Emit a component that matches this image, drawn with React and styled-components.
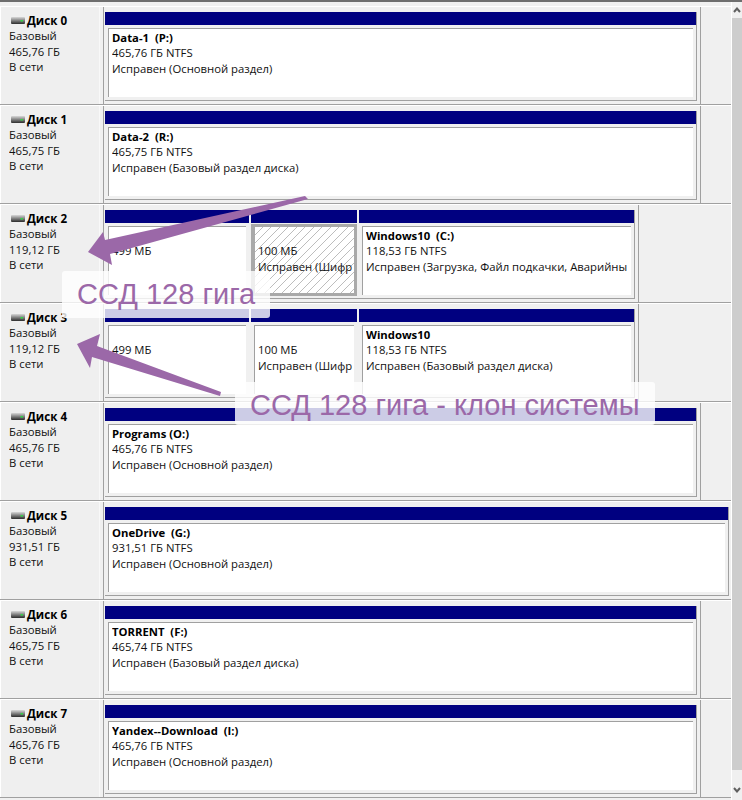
import React from "react";
import styled, { createGlobalStyle, css } from "styled-components";

const Global = createGlobalStyle`
  html, body { margin: 0; padding: 0; background: #f0f0f0; }
  body { width: 742px; height: 800px; overflow: hidden; }
`;

const LINE = "#a0a0a0";

const Page = styled.div`
  position: relative;
  width: 742px;
  height: 800px;
  overflow: hidden;
  background: #f0f0f0;
  font-family: "Open Sans", "Noto Sans", sans-serif;
  font-size: 11.3px;
  line-height: 15.3px;
  color: #111;
  font-variant-ligatures: none;
`;
const TopLine = styled.div`
  height: 2px;
  background: #6e6e6e;
`;
const Body = styled.div`
  display: flex;
  height: 798px;
`;
const Rows = styled.div`
  width: 731px;
  padding-top: 4px;
  border-right: 1px solid #fff;
`;
const Scrollbar = styled.div`
  width: 10px;
  display: flex;
  flex-direction: column;
  align-items: stretch;
`;
const ArrowCap = styled.div`
  height: 16px;
  display: flex;
  align-items: center;
  justify-content: center;
`;
const BottomCap = styled(ArrowCap)`
  margin-top: auto;
  margin-bottom: 2px;
`;
const Thumb = styled.div`
  height: 752px;
  background: #cdcdcd;
`;
const Row = styled.div`
  display: flex;
  height: 99px;
  box-sizing: border-box;
  border-bottom: 1px solid ${LINE};
  border-top: 1px solid #fff;
`;
const Label = styled.div`
  width: 100px;
  margin-right: 3px;
  box-sizing: border-box;
  padding: 6px 0 0 8px;
  border-left: 1px solid #fff;
  border-right: 1px solid #f8f8f8;
  background: #efefef;
  white-space: nowrap;
`;
const DiskName = styled.div`
  display: flex;
  align-items: center;
  gap: 2px;
  padding-left: 2px;
  font-size: 11.6px;
  font-weight: 700;
  color: #000;
`;
const Track = styled.div`
  width: ${(p) => p.$width}px;
  box-sizing: border-box;
  display: flex;
  padding: 5px 3px 3px 1px;
  border-left: 1px solid ${LINE};
  ${(p) =>
    p.$open
      ? css`padding-right: 2px;`
      : css`border-right: 1px solid ${LINE};`}
`;
const Frame = styled.div`
  flex: 1;
  min-width: 0;
  display: flex;
  gap: 2px;
  border-right: 1px solid ${LINE};
  border-bottom: 1px solid ${LINE};
`;
const Partition = styled.div`
  width: ${(p) => (p.$width ? `${p.$width}px` : "auto")};
  flex: ${(p) => (p.$width ? "none" : "1")};
  min-width: 0;
  display: flex;
  flex-direction: column;
`;
const Bar = styled.div`
  height: 13px;
  background: #000080;
`;
const Cell = styled.div`
  flex: 1;
  min-height: 0;
  display: flex;
  padding: 3px;
`;
const Volume = styled.div`
  flex: 1;
  min-width: 0;
  box-sizing: border-box;
  padding: 1px 0 0 3px;
  background: #fff;
  border-top: 1px solid ${LINE};
  border-left: 1px solid ${LINE};
  overflow: hidden;
  ${(p) =>
    p.$selected &&
    css`
      margin: -2px -3px -1px -3px;
      padding: 1px 0 0 3px;
      border: 3px solid #a9a9a9;
      border-left-width: 4px;
      background: repeating-linear-gradient(135deg, #fff 0 5.2px, #bdbdbd 5.2px 6px);
    `}
`;
const Line = styled.div`
  white-space: pre;
  overflow: hidden;
  height: 15.3px;
`;
const VolumeName = styled(Line)`
  font-weight: 700;
  color: #000;
`;
const Callout = styled.div`
  position: absolute;
  left: ${(p) => p.$x}px;
  top: ${(p) => p.$y}px;
  width: ${(p) => p.$w}px;
  height: ${(p) => p.$h}px;
  box-sizing: border-box;
  padding: ${(p) => p.$shift}px 0 0 15px;
  border-radius: 3px;
  background: rgba(255, 255, 255, 0.8);
  font-family: "Liberation Sans", Arial, sans-serif;
  font-size: 29px;
  line-height: ${(p) => p.$h - p.$shift}px;
  color: #9b68a8;
  white-space: nowrap;
`;
const ArrowLayer = styled.svg`
  position: absolute;
  left: 0;
  top: 0;
  pointer-events: none;
`;
const IconSvg = styled.svg`
  display: block;
  flex: none;
`;

const DiskIcon = () => (
  <IconSvg width="14" height="7" viewBox="0 0 14 7">
    <defs>
      <linearGradient id="hd" x1="0" y1="0" x2="0" y2="1">
        <stop offset="0" stopColor="#d8d8d8" />
        <stop offset="0.45" stopColor="#8a8a8a" />
        <stop offset="1" stopColor="#2c2c2c" />
      </linearGradient>
    </defs>
    <rect x="0" y="0" width="14" height="7" rx="1" fill="url(#hd)" />
    <rect x="9.5" y="3" width="2.5" height="1.6" fill="#35d24a" />
  </IconSvg>
);

const disks = [
  { n: 0, size: "465,76 ГБ", w: 598, parts: [{ name: "Data-1  (P:)", lines: ["465,76 ГБ NTFS", "Исправен (Основной раздел)"] }] },
  { n: 1, size: "465,75 ГБ", w: 598, parts: [{ name: "Data-2  (R:)", lines: ["465,75 ГБ NTFS", "Исправен (Базовый раздел диска)"] }] },
  {
    n: 2, size: "119,12 ГБ", w: 536,
    parts: [
      { width: 144, name: "", lines: ["499 МБ", ""] },
      { width: 106, name: "", selected: true, lines: ["100 МБ", "Исправен (Шифр"] },
      { name: "Windows10  (C:)", lines: ["118,53 ГБ NTFS", "Исправен (Загрузка, Файл подкачки, Аварийны"] },
    ],
  },
  {
    n: 3, size: "119,12 ГБ", w: 536,
    parts: [
      { width: 144, name: "", lines: ["499 МБ", ""] },
      { width: 106, name: "", lines: ["100 МБ", "Исправен (Шифр"] },
      { name: "Windows10", lines: ["118,53 ГБ NTFS", "Исправен (Базовый раздел диска)"] },
    ],
  },
  { n: 4, size: "465,76 ГБ", w: 598, parts: [{ name: "Programs (O:)", lines: ["465,76 ГБ NTFS", "Исправен (Основной раздел)"] }] },
  { n: 5, size: "931,51 ГБ", w: 628, open: true, parts: [{ name: "OneDrive  (G:)", lines: ["931,51 ГБ NTFS", "Исправен (Основной раздел)"] }] },
  { n: 6, size: "465,75 ГБ", w: 598, parts: [{ name: "TORRENT  (F:)", lines: ["465,74 ГБ NTFS", "Исправен (Базовый раздел диска)"] }] },
  { n: 7, size: "465,76 ГБ", w: 598, parts: [{ name: "Yandex--Download  (I:)", lines: ["465,76 ГБ NTFS", "Исправен (Основной раздел)"] }] },
];

export default function App() {
  return (
    <Page>
      <Global />
      <TopLine />
      <Body>
        <Rows>
          {disks.map((d) => (
            <Row key={d.n}>
              <Label>
                <DiskName>
                  <DiskIcon />
                  Диск {d.n}
                </DiskName>
                <Line>Базовый</Line>
                <Line>{d.size}</Line>
                <Line>В сети</Line>
              </Label>
              <Track $width={d.w} $open={d.open}>
                <Frame>
                  {d.parts.map((p, i) => (
                    <Partition key={i} $width={p.width}>
                      <Bar />
                      <Cell>
                        <Volume $selected={p.selected}>
                          <VolumeName>{p.name || " "}</VolumeName>
                          {p.lines.map((l, j) => (
                            <Line key={j}>{l}</Line>
                          ))}
                        </Volume>
                      </Cell>
                    </Partition>
                  ))}
                </Frame>
              </Track>
            </Row>
          ))}
        </Rows>
        <Scrollbar>
          <ArrowCap>
            <svg width="8" height="6" viewBox="0 0 8 6"><path d="M1 5 L4 1.5 L7 5" fill="none" stroke="#606060" strokeWidth="2" /></svg>
          </ArrowCap>
          <Thumb />
          <BottomCap>
            <svg width="8" height="6" viewBox="0 0 8 6"><path d="M1 1 L4 4.5 L7 1" fill="none" stroke="#606060" strokeWidth="2" /></svg>
          </BottomCap>
        </Scrollbar>
      </Body>
      <ArrowLayer width="742" height="800" viewBox="0 0 742 800">
        <polygon fill="#9b68a8" points="305,196 105,240 103,232 88,252 112,265 110,254 308,199" />
        <polygon fill="#9b68a8" points="77,344 100,334 97,346 221,392 220,396 92,357 90,368" />
      </ArrowLayer>
      <Callout $x={62} $y={271} $w={208} $h={47} $shift={0}>ССД 128 гига</Callout>
      <Callout $x={235} $y={382} $w={420} $h={43} $shift={3}>ССД 128 гига - клон системы</Callout>
    </Page>
  );
}
